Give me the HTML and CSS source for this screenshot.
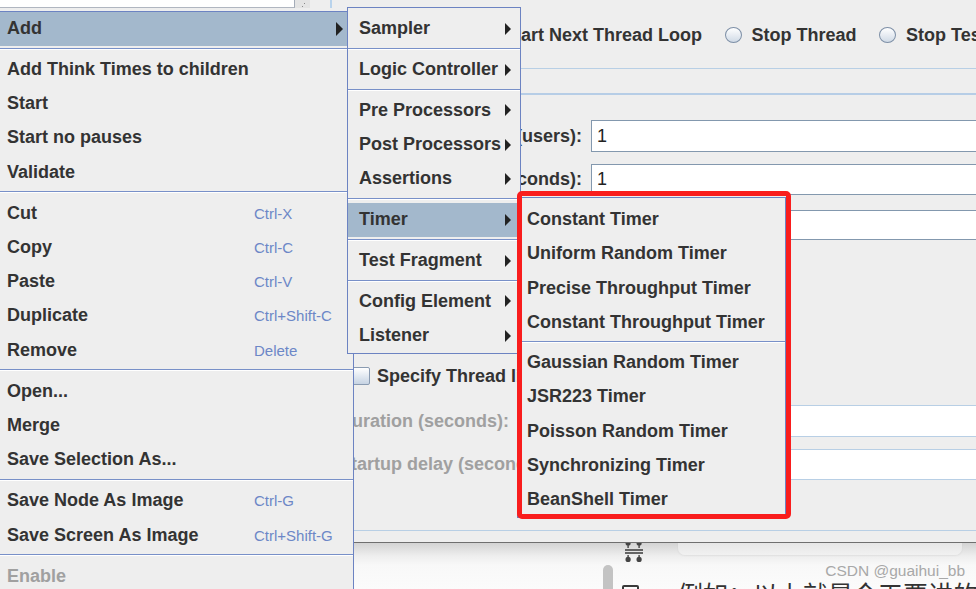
FILE: index.html
```html
<!DOCTYPE html>
<html lang="en">
<head>
<meta charset="utf-8">
<title>JMeter context menu</title>
<link rel="stylesheet" href="styles.css">
</head>
<body>
<div class="screen">
  <div class="window">
    <div class="topstrip">
      <div class="tf"></div>
      <div class="corner"><span class="cdot d1"></span><span class="cdot d2"></span></div>
      <div class="tspace"></div>
      <div class="vline"></div>
    </div>
    <div class="form">
      <div class="radiorow">
        <span class="radio-item"><span class="radio"></span>Start Next Thread Loop</span>
        <span class="radio-item"><span class="radio"></span>Stop Thread</span>
        <span class="radio-item"><span class="radio"></span>Stop Test</span>
        <span class="radio-item"><span class="radio"></span>Stop Test Now</span>
      </div>
      <div class="hr hr-a"></div>
      <div class="hr hr-b"></div>
      <div class="frow f1"><span class="flabel">Number of Threads (users):</span><span class="input">1</span></div>
      <div class="frow f2"><span class="flabel">Ramp-up period (seconds):</span><span class="input">1</span></div>
      <div class="frow f3"><span class="flabel">Loop Count:</span><span class="input">1</span></div>
      <div class="crow"><span class="check"></span><span class="ctext">Specify Thread lifetime</span></div>
      <div class="drow d-dur"><span class="dlabel">Duration (seconds):</span><span class="input dis"></span></div>
      <div class="drow d-start"><span class="dlabel">Startup delay (seconds):</span><span class="input dis"></span></div>
      <div class="hr hr-c"></div>
    </div>
  </div>
  <div class="page">
    <div class="pspace"></div>
    <div class="sbcol"><div class="thumb"></div></div>
    <div class="tools">
      <svg class="drag" width="20" height="21" viewBox="0 0 20 21">
        <path d="M1.5 0 A2.6 2.6 0 0 0 6.7 0 Z"/>
        <path d="M12.5 0 A2.6 2.6 0 0 0 17.7 0 Z"/>
        <path d="M4.1 1.5 L4.1 5 M15.1 1.5 L15.1 5" stroke="#444" stroke-width="1.4"/>
        <rect x="1" y="6.2" width="18" height="1.6"/>
        <rect x="1" y="9.2" width="18" height="1.6"/>
        <path d="M4.1 12 L4.1 14 M15.1 12 L15.1 14" stroke="#444" stroke-width="1.4"/>
        <circle cx="4.1" cy="16.4" r="2.6"/>
        <circle cx="15.1" cy="16.4" r="2.6"/>
      </svg>
      <div class="sq"></div>
    </div>
    <div class="article">
      <div class="card"></div>
      <div class="wm">CSDN @guaihui_bb</div>
      <div class="para">例如：以上就是今天要讲的内容</div>
    </div>
  </div>

  <div class="menu menu-main">
    <div class="mi first active"><span class="mt">Add</span><span class="arrow"></span></div>
    <div class="sep"></div>
    <div class="mi"><span class="mt">Add Think Times to children</span></div>
    <div class="mi"><span class="mt">Start</span></div>
    <div class="mi"><span class="mt">Start no pauses</span></div>
    <div class="mi"><span class="mt">Validate</span></div>
    <div class="sep"></div>
    <div class="mi"><span class="mt">Cut</span><span class="sc">Ctrl-X</span></div>
    <div class="mi"><span class="mt">Copy</span><span class="sc">Ctrl-C</span></div>
    <div class="mi"><span class="mt">Paste</span><span class="sc">Ctrl-V</span></div>
    <div class="mi"><span class="mt">Duplicate</span><span class="sc">Ctrl+Shift-C</span></div>
    <div class="mi"><span class="mt">Remove</span><span class="sc">Delete</span></div>
    <div class="sep"></div>
    <div class="mi"><span class="mt">Open...</span></div>
    <div class="mi"><span class="mt">Merge</span></div>
    <div class="mi"><span class="mt">Save Selection As...</span></div>
    <div class="sep"></div>
    <div class="mi"><span class="mt">Save Node As Image</span><span class="sc">Ctrl-G</span></div>
    <div class="mi"><span class="mt">Save Screen As Image</span><span class="sc">Ctrl+Shift-G</span></div>
    <div class="sep"></div>
    <div class="mi disabled"><span class="mt">Enable</span></div>
    <div class="mi disabled"><span class="mt">Disable</span></div>
  </div>

  <div class="menu menu-sub">
    <div class="mi"><span class="mt">Sampler</span><span class="arrow small"></span></div>
    <div class="sep"></div>
    <div class="mi"><span class="mt">Logic Controller</span><span class="arrow small"></span></div>
    <div class="sep"></div>
    <div class="mi"><span class="mt">Pre Processors</span><span class="arrow small"></span></div>
    <div class="mi"><span class="mt">Post Processors</span><span class="arrow small"></span></div>
    <div class="mi"><span class="mt">Assertions</span><span class="arrow small"></span></div>
    <div class="sep"></div>
    <div class="mi active"><span class="mt">Timer</span><span class="arrow small"></span></div>
    <div class="sep"></div>
    <div class="mi"><span class="mt">Test Fragment</span><span class="arrow small"></span></div>
    <div class="sep"></div>
    <div class="mi"><span class="mt">Config Element</span><span class="arrow small"></span></div>
    <div class="mi"><span class="mt">Listener</span><span class="arrow small"></span></div>
  </div>

  <div class="menu menu-timer">
    <div class="mi"><span class="mt">Constant Timer</span></div>
    <div class="mi"><span class="mt">Uniform Random Timer</span></div>
    <div class="mi"><span class="mt">Precise Throughput Timer</span></div>
    <div class="mi"><span class="mt">Constant Throughput Timer</span></div>
    <div class="sep"></div>
    <div class="mi"><span class="mt">Gaussian Random Timer</span></div>
    <div class="mi"><span class="mt">JSR223 Timer</span></div>
    <div class="mi"><span class="mt">Poisson Random Timer</span></div>
    <div class="mi"><span class="mt">Synchronizing Timer</span></div>
    <div class="mi"><span class="mt">BeanShell Timer</span></div>
  </div>

  <div class="annot"></div>
</div>
</body>
</html>
```

FILE: styles.css
```css
* { box-sizing: border-box; }
body {
  margin: 0;
  font-family: "Liberation Sans", Arial, sans-serif;
  color: #333;
}
.screen {
  position: relative;
  width: 976px;
  height: 589px;
  overflow: hidden;
  background: #eeeeee;
}

/* ---------- background window ---------- */
.window {
  height: 543px;
  background: #eeeeee;
  border-bottom: 1px solid #6f6f6f;
  overflow: hidden;
}
.topstrip {
  height: 11px;
  display: flex;
}
.tf {
  width: 295px;
  height: 8px;
  background: #ffffff;
  border-right: 1px solid #a4acb8;
  border-bottom: 1px solid #b0b6c0;
}
.corner {
  width: 15px;
  height: 8px;
  background: #e4e4e4;
  position: relative;
}
.cdot {
  position: absolute;
  width: 1px;
  height: 1px;
  background: #8a8a8a;
}
.d1 { left: 9px; top: 3px; }
.d2 { left: 7px; top: 6px; }
.tspace { width: 20px; }
.vline {
  width: 2px;
  height: 8px;
  background: #b9d3ec;
}

.form {
  padding-left: 339px;
  display: flex;
  flex-direction: column;
  font-size: 18px;
  font-weight: bold;
  white-space: nowrap;
}
.form > * { flex-shrink: 0; }
.radiorow {
  height: 48px;
  display: flex;
  align-items: center;
  padding-left: 137px;
}
.radio-item {
  display: flex;
  align-items: center;
  gap: 10px;
  margin-right: 22.5px;
  flex-shrink: 0;
}
.radio {
  width: 17px;
  height: 16px;
  border-radius: 50%;
  border: 1px solid #7d8fa6;
  background: linear-gradient(#ffffff, #d0dae6);
  flex-shrink: 0;
}
.hr {
  height: 1px;
  background: #b8cfe5;
  margin-right: -20px;
}
.hr-a { margin-top: 9px; }
.hr-b { margin-top: 24px; height: 2px; background: #b6cde6; }
.hr-c { margin-top: 50px; }

.frow {
  display: flex;
  align-items: center;
}
.f1 { margin-top: 25px; height: 32px; }
.f2 { margin-top: 12px; height: 31px; }
.f3 { margin-top: 15px; height: 30px; }
.flabel {
  width: 243px;
  margin-right: 9px;
  text-align: right;
  flex-shrink: 0;
}
.input {
  flex: 1;
  height: 100%;
  margin-right: -20px;
  background: #ffffff;
  border: 1px solid #8398ae;
  font-weight: normal;
  color: #222;
  padding-left: 5px;
  display: flex;
  align-items: center;
}
.input.dis { border-color: #b8cfe5; }

.crow {
  margin-top: 124px;
  height: 24px;
  display: flex;
  align-items: center;
  padding-left: 13px;
}
.check {
  width: 18px;
  height: 18px;
  border: 1px solid #8a9bb1;
  border-radius: 2px;
  background: linear-gradient(#ffffff, #c6d3e3);
  margin-right: 7px;
  flex-shrink: 0;
}
.drow {
  display: flex;
  align-items: center;
  color: #a0a0a0;
}
.d-dur { margin-top: 17px; height: 32px; }
.d-start { margin-top: 12px; height: 31px; }
.dlabel {
  width: 178px;
  flex-shrink: 0;
  overflow: hidden;
}

/* ---------- page below the window ---------- */
.page {
  height: 46px;
  display: flex;
  align-items: flex-start;
  background: linear-gradient(#d3d3d3, #eeeeee 13px, #f8f8f8 22px, #fbfbfb);
}
.pspace { width: 603px; flex-shrink: 0; }
.sbcol { width: 19px; flex-shrink: 0; }
.thumb {
  margin-top: 22px;
  width: 10px;
  height: 34px;
  border-radius: 5px;
  background: #c3c3c3;
}
.tools {
  width: 56px;
  flex-shrink: 0;
  display: flex;
  flex-direction: column;
}
.tools > * { flex-shrink: 0; }
.drag {
  margin-left: 2px;
  fill: #444;
}
.sq {
  margin-top: 21px;
  width: 17px;
  height: 17px;
  border: 2px solid #3a3a3a;
  border-radius: 2px;
}
.article {
  flex: 1;
  display: flex;
  flex-direction: column;
}
.article > * { flex-shrink: 0; }
.card {
  width: 284px;
  height: 12px;
  background: linear-gradient(#e6e6e6, #f1f1f1);
  border-radius: 0 0 7px 7px;
  box-shadow: 0 1px 2px rgba(0, 0, 0, 0.06);
}
.wm {
  width: 287px;
  margin-top: 8px;
  height: 16px;
  line-height: 16px;
  text-align: right;
  font-size: 15.5px;
  color: #a8a8a8;
  white-space: nowrap;
}
.para {
  height: 28px;
  line-height: 28px;
  font-size: 25px;
  color: #333;
  white-space: nowrap;
  font-family: "Noto Sans CJK SC", "Noto Sans", sans-serif;
}

/* ---------- popup menus ---------- */
.menu {
  position: absolute;
  background: #eeeeee;
  border: 1px solid #6c83c2;
  font-size: 18px;
  font-weight: bold;
  color: #333;
  white-space: nowrap;
}
.mi {
  height: 34.2px;
  display: flex;
  align-items: center;
}
.mi.active { background: #a3b8cc; }
.mi.disabled { color: #a0a0a0; }
.sep {
  height: 7px;
  padding-top: 2px;
}
.sep::before {
  content: "";
  display: block;
  height: 1px;
  background: #7890c8;
  border-bottom: 1px solid #ffffff;
  box-sizing: content-box;
}
.arrow {
  margin-left: auto;
  width: 0;
  height: 0;
  border-left: 7px solid #222;
  border-top: 7px solid transparent;
  border-bottom: 7px solid transparent;
}
.arrow.small {
  border-left-width: 6px;
  border-top-width: 6px;
  border-bottom-width: 6px;
}

.menu-main {
  left: -1px;
  top: 11px;
  width: 355px;
  border-bottom: none;
}
.menu-main .mi { padding-left: 7px; }
.menu-main .mi.first { height: 33.5px; }
.menu-main .arrow { margin-right: 10px; }
.menu-main .mt { width: 247px; flex-shrink: 0; }
.sc {
  font-size: 15px;
  font-weight: normal;
  color: #6c87c7;
}

.menu-sub {
  left: 347px;
  top: 7px;
  width: 174px;
  padding-top: 3.6px;
}
.menu-sub .mi { height: 34.3px; padding-left: 11px; }
.menu-sub .sep { height: 6.5px; }
.menu-sub .arrow { margin-right: 9px; }

.menu-timer {
  left: 517px;
  top: 197px;
  width: 269px;
  padding-top: 4.3px;
}
.menu-timer .mi { height: 34.3px; padding-left: 9px; }
.menu-timer .sep { height: 6px; }

.annot {
  position: absolute;
  left: 517px;
  top: 191px;
  width: 274px;
  height: 328px;
  border: 5px solid #f91d1d;
  border-radius: 5px;
  pointer-events: none;
}
```
